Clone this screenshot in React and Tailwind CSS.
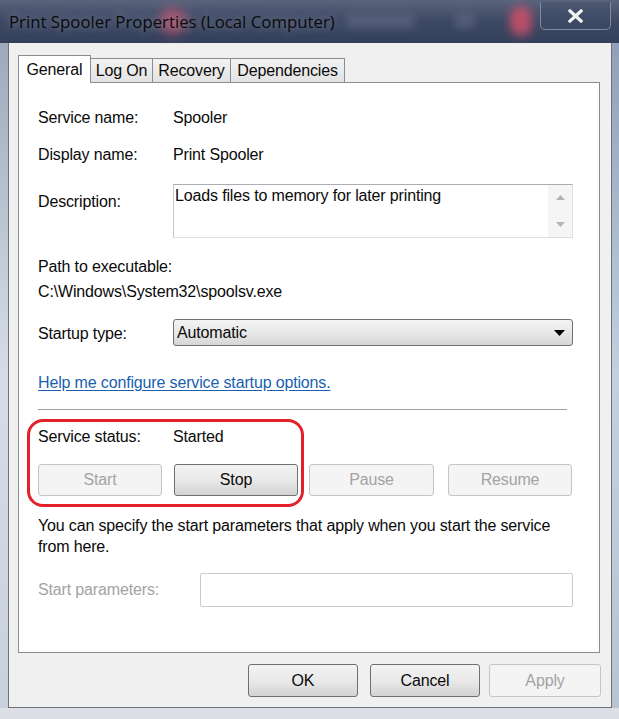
import React from 'react';

const Btn = ({ label, disabled, className = '' }) => (
  <div
    className={`flex items-center justify-center rounded-[3px] border text-[16px] tracking-[-0.15px] ${
      disabled
        ? 'border-[#c3c6c9] bg-[#f4f4f4] text-[#a3a3a3]'
        : 'border-[#707070] bg-gradient-to-b from-[#f3f3f3] via-[#e9e9e9] to-[#d3d3d3] text-[#0a0a0a]'
    } ${className}`}
  >
    {label}
  </div>
);

const Tab = ({ label, active, className = '' }) => (
  <div
    className={`flex items-center justify-center border border-[#898c95] text-[16px] tracking-[-0.15px] text-[#0a0a0a] ${
      active
        ? 'relative z-10 -mb-px h-[28px] border-b-0 bg-white'
        : 'h-[24px] border-b-0 bg-gradient-to-b from-[#f2f2f2] to-[#e3e3e3]'
    } ${className}`}
  >
    {label}
  </div>
);

export default function App() {
  return (
    <div className="relative flex h-[719px] w-[619px] flex-col overflow-hidden bg-[#cfd6df] font-['Liberation_Sans',Arial,sans-serif]">
      {/* Title bar */}
      <div className="relative flex h-[43px] shrink-0 items-center bg-gradient-to-b from-[#5a647d] via-[#3d4862] to-[#34405b] pl-[9px]">
        <div className="absolute left-[160px] top-[8px] h-[26px] w-[26px] rounded-full bg-[#d4576f] opacity-70 blur-[6px]" />
        <div className="absolute left-[510px] top-[6px] h-[30px] w-[22px] rounded-full bg-[#d8506a] opacity-80 blur-[5px]" />
        <div className="absolute left-[345px] top-[14px] h-[14px] w-[70px] rounded bg-[#6a7490] opacity-50 blur-[4px]" />
        <div className="absolute left-[455px] top-[14px] h-[14px] w-[20px] rounded bg-[#6a7490] opacity-50 blur-[4px]" />
        <span className="relative font-['Open_Sans',sans-serif] text-[16.8px] text-[#0a0a0a] [text-shadow:0_0_10px_rgba(190,200,220,0.6)]">
          Print Spooler Properties (Local Computer)
        </span>
        <div className="absolute left-[540px] top-[2px] flex h-[28px] w-[71px] items-center justify-center rounded-b-[5px] border border-t-0 border-[#7f89a0] bg-[#3f4a66]/40">
          <svg width="17" height="14" viewBox="0 0 17 14">
            <path d="M3 2 L14 12 M14 2 L3 12" stroke="#f4f4f4" strokeWidth="3.2" strokeLinecap="square" />
          </svg>
        </div>
      </div>

      <div className="flex h-[665px] shrink-0">
        <div className="w-[8px] bg-gradient-to-b from-[#9eaabb] via-[#d6dde6] to-[#c8d0da]" />
        {/* Client */}
        <div className="flex w-[604px] flex-col border border-t-0 border-[#6e727a] bg-[#f0f0f0]">
          <div className="flex items-end pl-[9px] pt-[12px]">
            <Tab label="General" active className="w-[73px]" />
            <Tab label="Log On" className="w-[62px] border-l-0" />
            <Tab label="Recovery" className="w-[78px] border-l-0" />
            <Tab label="Dependencies" className="w-[114px] border-l-0" />
          </div>

          {/* Panel */}
          <div className="relative ml-[9px] flex h-[571px] w-[582px] flex-col border border-[#898c95] bg-white pl-[19px] pt-[24px] text-[16px] tracking-[-0.15px] text-[#0a0a0a]">
            <div className="absolute left-[8px] top-[336px] h-[88px] w-[277px] rounded-[16px] border-[3px] border-[#e3212b]" />

            <div className="flex h-[22px] items-center">
              <span className="w-[135px]">Service name:</span>
              <span>Spooler</span>
            </div>
            <div className="mt-[15px] flex h-[22px] items-center">
              <span className="w-[135px]">Display name:</span>
              <span>Print Spooler</span>
            </div>
            <div className="mt-[18px] flex items-start">
              <span className="mt-[7px] w-[135px] leading-[22px]">Description:</span>
              <div className="flex h-[54px] w-[400px] border border-[#dbdfe6] border-t-[#abadb3] border-l-[#c5c8cf]">
                <div className="flex-1 pl-[1px] pt-[1px] leading-[20px]">Loads files to memory for later printing</div>
                <div className="flex w-[24px] flex-col items-center justify-between bg-[#f5f5f5] py-[10px]">
                  <svg width="9" height="5" viewBox="0 0 9 5">
                    <path d="M0 5 L4.5 0 L9 5 Z" fill="#b4b4b4" />
                  </svg>
                  <svg width="9" height="5" viewBox="0 0 9 5">
                    <path d="M0 0 L4.5 5 L9 0 Z" fill="#b4b4b4" />
                  </svg>
                </div>
              </div>
            </div>
            <div className="mt-[18px] flex h-[22px] items-center">Path to executable:</div>
            <div className="mt-[3px] flex h-[22px] items-center">C:\Windows\System32\spoolsv.exe</div>
            <div className="mt-[16px] flex items-center">
              <span className="w-[135px] pt-[3px]">Startup type:</span>
              <div className="flex h-[27px] w-[400px] items-center justify-between rounded-[3px] border border-[#707070] bg-gradient-to-b from-[#f3f3f3] via-[#e8e8e8] to-[#d6d6d6] pl-[3px] pr-[7px]">
                <span>Automatic</span>
                <svg width="11" height="6" viewBox="0 0 11 6">
                  <path d="M0 0 L11 0 L5.5 6 Z" fill="#000" />
                </svg>
              </div>
            </div>
            <div className="mt-[26px] flex h-[22px] items-center">
              <span className="text-[#1a5fb0] underline decoration-[#1a5fb0] underline-offset-[2px]">
                Help me configure service startup options.
              </span>
            </div>
            <div className="mt-[15px] h-px w-[529px] bg-[#a0a0a0]" />
            <div className="mt-[16px] flex h-[22px] items-center">
              <span className="w-[135px]">Service status:</span>
              <span>Started</span>
            </div>
            <div className="mt-[16px] flex h-[32px]">
              <Btn label="Start" disabled className="w-[124px]" />
              <Btn label="Stop" className="ml-[12px] w-[124px]" />
              <Btn label="Pause" disabled className="ml-[11px] w-[125px]" />
              <Btn label="Resume" disabled className="ml-[14px] w-[124px]" />
            </div>
            <p className="mt-[19px] leading-[21px]">
              You can specify the start parameters that apply when you start the service
              <br />
              from here.
            </p>
            <div className="mt-[16px] flex items-center">
              <span className="w-[162px] text-[#a3a3a3]">Start parameters:</span>
              <div className="h-[34px] w-[373px] rounded-[2px] border border-[#c9cbce] bg-white" />
            </div>
          </div>

          {/* Dialog buttons */}
          <div className="mt-[11px] flex justify-end pr-[10px]">
            <Btn label="OK" className="h-[33px] w-[110px]" />
            <Btn label="Cancel" className="ml-[12px] h-[33px] w-[110px]" />
            <Btn label="Apply" disabled className="ml-[9px] h-[33px] w-[112px]" />
          </div>
        </div>
        <div className="flex-1 bg-gradient-to-b from-[#8fa0b8] via-[#c4d0de] to-[#b7c4d3]" />
      </div>
      <div className="flex-1 bg-[#dce0e6]" />
    </div>
  );
}
